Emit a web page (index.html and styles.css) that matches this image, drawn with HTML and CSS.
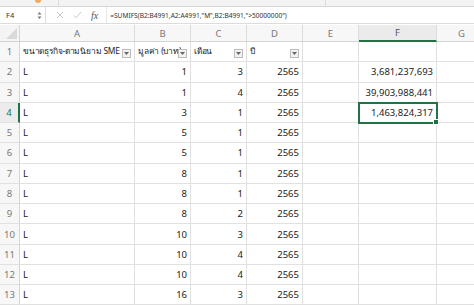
FILE: index.html
```html
<!DOCTYPE html>
<html lang="th">
<head>
    <meta charset="UTF-8">
    <title>SUMIFS</title>
    <link rel="stylesheet" href="styles.css">
</head>
<body>
    <div class="ribbon-edge">
        <span class="tab-mark"></span>
        <span class="ribbon-sep s1"></span>
        <span class="ribbon-sep s2"></span>
    </div>

    <div class="formula-bar">
        <div class="name-box">
            <span>F4</span>
            <svg class="spin" width="5" height="9" viewBox="0 0 5 9"><path d="M0.5 3.5 L2.5 1 L4.5 3.5Z M0.5 5.5 L2.5 8 L4.5 5.5Z" fill="#777"/></svg>
        </div>
        <div class="fx-buttons">
            <svg width="8" height="8" viewBox="0 0 8 8"><path d="M1 1 L7 7 M7 1 L1 7" stroke="#c8c8c8" stroke-width="1"/></svg>
            <svg width="9" height="8" viewBox="0 0 9 8"><path d="M1 4.5 L3.2 6.8 L8 1" stroke="#c8c8c8" stroke-width="1" fill="none"/></svg>
            <span class="fx">fx</span>
        </div>
        <div class="formula">=SUMIFS(B2:B4991,A2:A4991,"M",B2:B4991,"&gt;50000000")</div>
    </div>

    <div class="sheet" id="sheet">
        <div class="corner"><span class="tri"></span></div>
        <div class="col-head">A</div>
        <div class="col-head">B</div>
        <div class="col-head">C</div>
        <div class="col-head">D</div>
        <div class="col-head">E</div>
        <div class="col-head active">F</div>
        <div class="col-head">G</div>
    </div>

    <script>
        const sheet = document.getElementById('sheet');

        // rows: A, B, C, D, F
        const rows = [
            ['L', '1', '3', '2565', '3,681,237,693'],
            ['L', '1', '4', '2565', '39,903,988,441'],
            ['L', '3', '1', '2565', '1,463,824,317'],
            ['L', '5', '1', '2565', ''],
            ['L', '5', '1', '2565', ''],
            ['L', '8', '1', '2565', ''],
            ['L', '8', '1', '2565', ''],
            ['L', '8', '2', '2565', ''],
            ['L', '10', '3', '2565', ''],
            ['L', '10', '4', '2565', ''],
            ['L', '10', '4', '2565', ''],
            ['L', '16', '3', '2565', '']
        ];

        function cell(text, cls) {
            const d = document.createElement('div');
            d.className = 'cell ' + (cls || '');
            d.textContent = text;
            sheet.appendChild(d);
            return d;
        }

        function filterCell(text, cls) {
            const d = cell('', 'head-cell ' + (cls || ''));
            const t = document.createElement('span');
            t.className = 'head-text';
            t.textContent = text;
            const b = document.createElement('span');
            b.className = 'filter-btn';
            b.innerHTML = '<svg width="5" height="3" viewBox="0 0 5 3"><path d="M0 0 L5 0 L2.5 3Z" fill="#666"/></svg>';
            d.appendChild(t);
            d.appendChild(b);
            return d;
        }

        // header row with filters
        cell('1', 'row-head');
        filterCell('ขนาดธุรกิจ-ตามนิยาม SME');
        filterCell('มูลค่า (บาท)');
        filterCell('เดือน');
        filterCell('ปี');
        cell('');
        cell('', 'f-col');
        cell('');

        rows.forEach((r, i) => {
            const n = i + 2;
            cell(String(n), 'row-head' + (n === 4 ? ' active' : ''));
            cell(r[0]);
            cell(r[1], 'num');
            cell(r[2], 'num');
            cell(r[3], 'num');
            cell('');
            cell(r[4], 'num f-col' + (n === 4 ? ' selected' : ''));
            cell('');
        });
    </script>
</body>
</html>
```

FILE: styles.css
```css
* {
    box-sizing: border-box;
}

body {
    margin: 0;
    width: 474px;
    height: 306px;
    overflow: hidden;
    background: #ffffff;
    font-family: "Noto Sans", "Open Sans", sans-serif;
    color: #222;
}

.ribbon-edge {
    position: relative;
    height: 7px;
    background: #f3f3f3;
    border-bottom: 1px solid #d6d6d6;
}

.tab-mark {
    position: absolute;
    left: 35px;
    top: -3px;
    width: 6px;
    height: 6px;
    border-radius: 50%;
    background: #f0a860;
}

.ribbon-sep {
    position: absolute;
    top: 0;
    width: 1px;
    height: 7px;
    background: #dcdcdc;
}

.s1 { left: 58px; }
.s2 { left: 325px; }

.formula-bar {
    display: flex;
    align-items: center;
    height: 17px;
    background: #ffffff;
    border-bottom: 1px solid #dcdcdc;
    font-size: 8px;
}

.name-box {
    display: flex;
    align-items: center;
    justify-content: space-between;
    width: 46px;
    height: 100%;
    padding: 0 3px 0 6px;
    border-right: 1px solid #dcdcdc;
    color: #333;
    font-size: 7.5px;
}

.fx-buttons {
    display: flex;
    align-items: center;
    gap: 9px;
    padding: 0 8px 0 10px;
    height: 100%;
    border-right: 1px solid #e6e6e6;
}

.fx {
    font-family: "Liberation Serif", serif;
    font-style: italic;
    font-size: 10px;
    color: #555;
}

.formula {
    padding-left: 3px;
    color: #333;
    white-space: nowrap;
    font-size: 6.6px;
}

.sheet {
    display: grid;
    grid-template-columns: 20px 115px 56px 56px 56px 56px 78px 50px;
    grid-template-rows: 17px repeat(13, 20.27px);
    margin-top: 1px;
}

.corner {
    position: relative;
    background: #f4f4f4;
    border-right: 1px solid #d4d4d4;
    border-bottom: 1px solid #d4d4d4;
}

.tri {
    position: absolute;
    right: 2px;
    bottom: 2px;
    width: 0;
    height: 0;
    border-left: 11px solid transparent;
    border-bottom: 11px solid #d9d9d9;
}

.col-head {
    display: flex;
    align-items: center;
    justify-content: center;
    background: #f7f7f7;
    border-right: 1px solid #dcdcdc;
    border-bottom: 1px solid #d4d4d4;
    color: #777;
    font-size: 9.5px;
}

.col-head.active {
    background: #ebebeb;
    border-bottom: 2px solid #217346;
    color: #555;
}

.cell {
    display: flex;
    align-items: center;
    padding: 0 3px;
    border-right: 1px solid #e1e1e1;
    border-bottom: 1px solid #e1e1e1;
    white-space: nowrap;
    font-size: 9.5px;
    color: #222;
}

.cell.num {
    justify-content: flex-end;
    padding-right: 3px;
}

.row-head {
    justify-content: center;
    padding: 0;
    background: #f7f7f7;
    border-right: 1px solid #d4d4d4;
    color: #777;
    font-size: 9.5px;
}

.row-head.active {
    color: #217346;
    background: #ececec;
    border-right: 2px solid #217346;
}

.head-cell {
    position: relative;
    align-items: flex-start;
    padding-top: 2px;
    overflow: hidden;
}

.head-text {
    font-size: 8.4px;
    letter-spacing: -0.2px;
}

.filter-btn {
    position: absolute;
    right: 3px;
    bottom: 3px;
    display: flex;
    align-items: center;
    justify-content: center;
    width: 9px;
    height: 9px;
    background: #f2f2f2;
    border: 1px solid #bdbdbd;
}

.selected {
    outline: 2px solid #217346;
    outline-offset: -1px;
    position: relative;
}

.selected::after {
    content: "";
    position: absolute;
    right: -3px;
    bottom: -3px;
    width: 4px;
    height: 4px;
    background: #217346;
    border: 1px solid #fff;
}
```
